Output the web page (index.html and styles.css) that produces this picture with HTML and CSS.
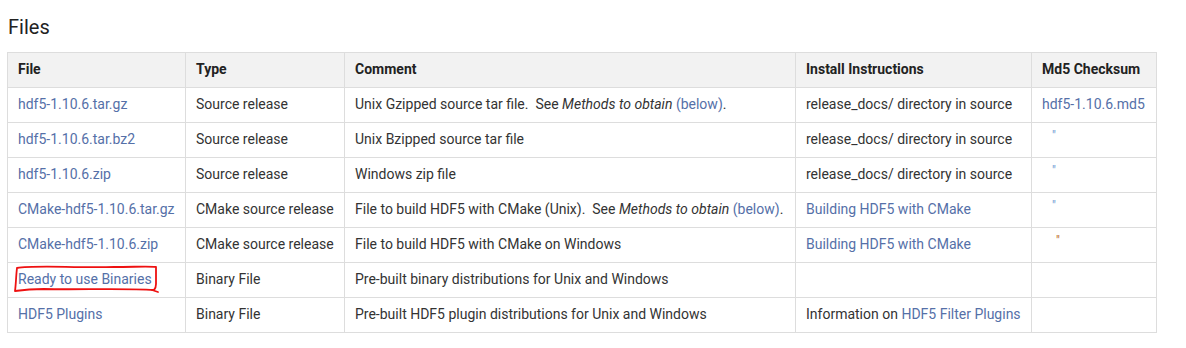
FILE: index.html
```html
<!DOCTYPE html>
<html lang="en">
<head>
    <meta charset="UTF-8">
    <title>Files</title>
    <link rel="stylesheet" href="styles.css">
</head>
<body>
    <h2 class="section-title">Files</h2>
    <table class="files-table">
        <thead>
            <tr>
                <th class="col-file">File</th>
                <th class="col-type">Type</th>
                <th class="col-comment">Comment</th>
                <th class="col-install">Install Instructions</th>
                <th class="col-md5">Md5 Checksum</th>
            </tr>
        </thead>
        <tbody>
            <tr>
                <td><a href="#">hdf5-1.10.6.tar.gz</a></td>
                <td>Source release</td>
                <td>Unix Gzipped source tar file.&nbsp; See <em>Methods to obtain</em> <a href="#">(below)</a>.</td>
                <td>release_docs/ directory in source</td>
                <td><a href="#">hdf5-1.10.6.md5</a></td>
            </tr>
            <tr>
                <td><a href="#">hdf5-1.10.6.tar.bz2</a></td>
                <td>Source release</td>
                <td>Unix Bzipped source tar file</td>
                <td>release_docs/ directory in source</td>
                <td><span class="ditto">"</span></td>
            </tr>
            <tr>
                <td><a href="#">hdf5-1.10.6.zip</a></td>
                <td>Source release</td>
                <td>Windows zip file</td>
                <td>release_docs/ directory in source</td>
                <td><span class="ditto">"</span></td>
            </tr>
            <tr>
                <td><a href="#">CMake-hdf5-1.10.6.tar.gz</a></td>
                <td>CMake source release</td>
                <td>File to build HDF5 with CMake (Unix).&nbsp; See <em>Methods to obtain</em> <a href="#">(below)</a>.</td>
                <td><a href="#">Building HDF5 with CMake</a></td>
                <td><span class="ditto">"</span></td>
            </tr>
            <tr>
                <td><a href="#">CMake-hdf5-1.10.6.zip</a></td>
                <td>CMake source release</td>
                <td>File to build HDF5 with CMake on Windows</td>
                <td><a href="#">Building HDF5 with CMake</a></td>
                <td><span class="ditto ditto-alt">"</span></td>
            </tr>
            <tr>
                <td>
                    <span class="marked">
                        <a href="#">Ready to use Binaries</a>
                        <svg class="scribble" width="150" height="32" viewBox="0 0 150 32" fill="none" stroke="#ee1111" stroke-width="1.8" stroke-linecap="round" stroke-linejoin="round">
                            <path d="M3 4 C20 1 60 4 100 3 C120 3 135 2 142 3 L142 20 C142 23 141 25 140 26 C110 24 60 26 30 25 C18 25 8 26 1 27 C2 20 2 12 3 4"/>
                            <path d="M138 26 L144 28"/>
                        </svg>
                    </span>
                </td>
                <td>Binary File</td>
                <td>Pre-built binary distributions for Unix and Windows</td>
                <td></td>
                <td></td>
            </tr>
            <tr>
                <td><a href="#">HDF5 Plugins</a></td>
                <td>Binary File</td>
                <td>Pre-built HDF5 plugin distributions for Unix and Windows</td>
                <td>Information on <a href="#">HDF5 Filter Plugins</a></td>
                <td></td>
            </tr>
        </tbody>
    </table>
</body>
</html>
```

FILE: styles.css
```css
body {
    font-family: 'Roboto', 'Liberation Sans', sans-serif;
    font-size: 14px;
    color: #333;
    background: #fff;
    margin: 0;
    padding: 0 7px;
}

.section-title {
    font-size: 20px;
    font-weight: 400;
    line-height: 24px;
    color: #222;
    margin: 15px 0 13px 1px;
}

.files-table {
    border-collapse: collapse;
    width: 1149px;
    table-layout: fixed;
}

.files-table th,
.files-table td {
    border: 1px solid #ddd;
    padding: 6px 10px 8px;
    line-height: 20px;
    text-align: left;
    vertical-align: middle;
    white-space: nowrap;
}

.files-table th {
    background-color: #f2f2f2;
    font-weight: 700;
    color: #222;
}

.col-file { width: 157px; }
.col-type { width: 138px; }
.col-comment { width: 430px; }
.col-install { width: 215px; }
.col-md5 { width: 104px; }

.files-table a {
    color: #5570a8;
    text-decoration: none;
}

.files-table em {
    font-style: italic;
}

.ditto {
    display: inline-block;
    margin-left: 10px;
    font-size: 12px;
    line-height: 12px;
    vertical-align: 4px;
    color: #6a9ad0;
}

.ditto-alt {
    margin-left: 14px;
    color: #b86a20;
}

.marked {
    position: relative;
    display: inline-block;
}

.scribble {
    position: absolute;
    left: -4px;
    top: -5px;
    pointer-events: none;
}
```
